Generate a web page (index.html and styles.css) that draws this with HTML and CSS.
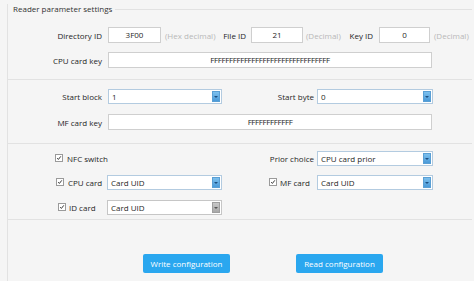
FILE: index.html
```html
<!DOCTYPE html>
<html>
<head>
<meta charset="utf-8">
<link rel="stylesheet" href="styles.css">
</head>
<body>
<div class="panel">
  <div class="title-row"><span class="title">Reader parameter settings</span><span class="rule"></span></div>

  <div class="section s1">
    <div class="row">
      <span class="lbl">Directory ID</span>
      <span class="input w-dir">3F00</span>
      <span class="hint h1">(Hex decimal)</span>
      <span class="lbl-r c-file">File ID</span>
      <span class="input w-file">21</span>
      <span class="hint h2">(Decimal)</span>
      <span class="lbl-r c-key">Key ID</span>
      <span class="input w-key">0</span>
      <span class="hint h3">(Decimal)</span>
    </div>
    <div class="row r2">
      <span class="lbl">CPU card key</span>
      <span class="input w-full hex">FFFFFFFFFFFFFFFFFFFFFFFFFFFFFFFF</span>
    </div>
  </div>

  <div class="section s2">
    <div class="row">
      <span class="lbl">Start block</span>
      <span class="combo w-left"><span class="val">1</span><span class="arrow"></span></span>
      <span class="lbl-r c-right">Start byte</span>
      <span class="combo w-right"><span class="val">0</span><span class="arrow"></span></span>
    </div>
    <div class="row r4">
      <span class="lbl">MF card key</span>
      <span class="input w-full hex">FFFFFFFFFFFF</span>
    </div>
  </div>

  <div class="section s3">
    <div class="row">
      <span class="chk-cell p-nfc"><span class="box"><svg viewBox="0 0 8 8"><path d="M1.6 4.2 L3.2 5.9 L6.4 1.8" /></svg></span><span class="txt">NFC switch</span></span>
      <span class="lbl-r c-prior">Prior choice</span>
      <span class="combo w-right"><span class="val">CPU card prior</span><span class="arrow"></span></span>
    </div>
    <div class="row r6">
      <span class="chk-cell p-cpu"><span class="box"><svg viewBox="0 0 8 8"><path d="M1.6 4.2 L3.2 5.9 L6.4 1.8" /></svg></span><span class="txt">CPU card</span></span>
      <span class="combo w-left2"><span class="val">Card UID</span><span class="arrow"></span></span>
      <span class="chk-cell c-mf"><span class="box"><svg viewBox="0 0 8 8"><path d="M1.6 4.2 L3.2 5.9 L6.4 1.8" /></svg></span><span class="txt">MF card</span></span>
      <span class="combo w-right"><span class="val">Card UID</span><span class="arrow"></span></span>
    </div>
    <div class="row r7">
      <span class="chk-cell p-id"><span class="box"><svg viewBox="0 0 8 8"><path d="M1.6 4.2 L3.2 5.9 L6.4 1.8" /></svg></span><span class="txt">ID card</span></span>
      <span class="combo w-left2 disabled"><span class="val">Card UID</span><span class="arrow"></span></span>
    </div>
  </div>

  <div class="buttons">
    <span class="btn">Write configuration</span>
    <span class="btn">Read configuration</span>
  </div>
</div>
</body>
</html>
```

FILE: styles.css
```css
html, body {
  margin: 0;
  padding: 0;
  background: #f5f5f5;
}
body {
  font-family: "Open Sans", "Noto Sans", sans-serif;
  font-size: 8px;
  color: #1f1f1f;
  width: 474px;
  height: 281px;
  overflow: hidden;
}
.panel {
  margin-left: 7px;
  margin-top: 4px;
  width: 464px;
  height: 277px;
  border-left: 1px solid #e2e2e2;
}
.title-row {
  display: flex;
  align-items: center;
  height: 10px;
}
.title {
  padding-left: 5px;
  padding-right: 3px;
  color: #333;
  line-height: 10px;
  white-space: nowrap;
}
.rule {
  flex: 1;
  border-top: 1px solid #e2e2e2;
  margin-top: 1px;
}
.section {
  border-bottom: 1px solid #e2e2e2;
}
.s1 { padding: 13px 0 11px; }
.s2 { padding: 8px 0 13px; }
.s3 { padding: 6px 0 4px; }
.row {
  display: flex;
  align-items: center;
  height: 16px;
  white-space: nowrap;
}
.r2 { margin-top: 9px; }
.r4 { margin-top: 10px; }
.r6 { margin-top: 8px; }
.r7 { margin-top: 9px; }
.lbl {
  width: 94px;
  margin-right: 6px;
  text-align: right;
  flex: none;
}
.lbl-r {
  text-align: right;
  flex: none;
}
.input {
  box-sizing: border-box;
  height: 16px;
  background: #fff;
  border: 1px solid #cfcfcf;
  text-align: center;
  line-height: 14px;
  flex: none;
  overflow: hidden;
}
.hex { letter-spacing: -0.4px; }
.w-dir { width: 53px; }
.w-file { width: 52px; margin-left: 5px; }
.w-key { width: 51px; margin-left: 6px; }
.w-full { width: 324px; }
.hint { color: #b8b8b8; flex: none; }
.h1 { width: 52px; margin-left: 4px; }
.h2 { width: 36px; margin-left: 3px; }
.h3 { margin-left: 4px; }
.c-file { width: 29px; }
.c-key { width: 31px; }

.combo {
  box-sizing: border-box;
  height: 15px;
  background: #fff;
  border: 1px solid #b3cbe0;
  display: flex;
  align-items: center;
  flex: none;
}
.combo .val {
  flex: 1;
  padding-left: 3px;
  line-height: 13px;
}
.combo .arrow {
  width: 8px;
  height: 11px;
  margin-right: 1px;
  background: linear-gradient(#7cc0ee, #4b9ad8);
  border: 1px solid #5a9fd4;
  box-sizing: border-box;
  position: relative;
}
.combo .arrow::after {
  content: "";
  position: absolute;
  left: 1px;
  top: 4px;
  border-left: 2px solid transparent;
  border-right: 2px solid transparent;
  border-top: 2px solid #1d4f80;
}
.combo.disabled { border-color: #c6c6c6; }
.combo.disabled .arrow {
  background: linear-gradient(#c8c8c8, #a8a8a8);
  border-color: #9e9e9e;
}
.combo.disabled .arrow::after { border-top-color: #555; }
.w-left { width: 114px; }
.w-left2 { width: 115px; }
.w-right { width: 116px; margin-left: 3px; }
.c-right { width: 92px; }
.c-prior { width: 92px; }

.chk-cell {
  display: flex;
  align-items: center;
  flex: none;
  box-sizing: border-box;
}
.box {
  width: 8px;
  height: 8px;
  box-sizing: border-box;
  border: 1px solid #9a9a9a;
  background: #fff;
  display: flex;
  flex: none;
}
.box svg {
  width: 6px;
  height: 6px;
}
.box path {
  fill: none;
  stroke: #333;
  stroke-width: 1.3;
}
.txt { margin-left: 4px; }
.p-nfc { width: 214px; padding-left: 47px; }
.p-cpu { width: 99px; padding-left: 48px; }
.p-id { width: 99px; padding-left: 50px; }
.p-id .txt { margin-left: 3px; }
.c-mf { width: 92px; padding-left: 47px; }
.c-mf .txt { margin-left: 3px; }

.buttons {
  display: flex;
  margin-top: 34px;
  padding-left: 135px;
  gap: 66px;
}
.btn {
  width: 87px;
  height: 19px;
  background: #2aa7ef;
  color: #fff;
  border-radius: 2px;
  text-align: center;
  line-height: 19px;
  font-size: 8px;
  flex: none;
}
```
